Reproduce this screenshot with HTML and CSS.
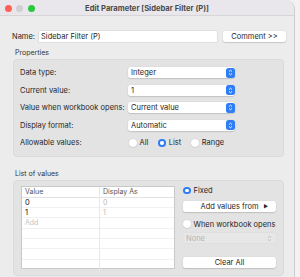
FILE: index.html
```html
<!DOCTYPE html>
<html lang="en">
<head>
    <meta charset="UTF-8">
    <meta name="viewport" content="width=device-width, initial-scale=1.0">
    <title>Edit Parameter</title>
    <link rel="stylesheet" href="styles.css">
</head>
<body>
    <div class="window">
        <div class="titlebar">
            <div class="lights">
                <span class="light red"></span>
                <span class="light gray"></span>
                <span class="light green"></span>
            </div>
            <div class="title">Edit Parameter [Sidebar Filter (P)]</div>
            <div></div>
        </div>

        <div class="name-row">
            <label class="name-label">Name:</label>
            <div class="name-input">Sidebar Filter (P)</div>
            <button class="btn comment-btn">Comment &gt;&gt;</button>
        </div>

        <div class="section-label">Properties</div>
        <div class="group props">
            <div class="prop-row">
                <span class="prop-label">Data type:</span>
                <div class="select"><span>Integer</span><span class="stepper"><svg width="5" height="7" viewBox="0 0 5 7"><path d="M1 2.6 2.5 1.2 4 2.6M1 4.4 2.5 5.8 4 4.4" fill="none" stroke="#fff" stroke-width="0.9"/></svg></span></div>
            </div>
            <div class="prop-row">
                <span class="prop-label">Current value:</span>
                <div class="select"><span>1</span><span class="stepper"><svg width="5" height="7" viewBox="0 0 5 7"><path d="M1 2.6 2.5 1.2 4 2.6M1 4.4 2.5 5.8 4 4.4" fill="none" stroke="#fff" stroke-width="0.9"/></svg></span></div>
            </div>
            <div class="prop-row">
                <span class="prop-label">Value when workbook opens:</span>
                <div class="select"><span>Current value</span><span class="stepper"><svg width="5" height="7" viewBox="0 0 5 7"><path d="M1 2.6 2.5 1.2 4 2.6M1 4.4 2.5 5.8 4 4.4" fill="none" stroke="#fff" stroke-width="0.9"/></svg></span></div>
            </div>
            <div class="prop-row">
                <span class="prop-label">Display format:</span>
                <div class="select"><span>Automatic</span><span class="stepper"><svg width="5" height="7" viewBox="0 0 5 7"><path d="M1 2.6 2.5 1.2 4 2.6M1 4.4 2.5 5.8 4 4.4" fill="none" stroke="#fff" stroke-width="0.9"/></svg></span></div>
            </div>
            <div class="prop-row">
                <span class="prop-label">Allowable values:</span>
                <div class="radios">
                    <span class="radio-item"><span class="radio"></span>All</span>
                    <span class="radio-item"><span class="radio on"></span>List</span>
                    <span class="radio-item"><span class="radio"></span>Range</span>
                </div>
            </div>
        </div>

        <div class="section-label list-label">List of values</div>
        <div class="group values">
            <div class="table">
                <div class="trow head"><span>Value</span><span>Display As</span></div>
                <div class="trow"><span class="val">0</span><span class="dim">0</span></div>
                <div class="trow"><span class="val">1</span><span class="dim">1</span></div>
                <div class="trow"><span class="add">Add</span><span></span></div>
                <div class="trow"><span></span><span></span></div>
                <div class="trow"><span></span><span></span></div>
                <div class="trow"><span></span><span></span></div>
                <div class="trow last"><span></span><span></span></div>
            </div>
            <div class="side">
                <span class="radio-item"><span class="radio on"></span>Fixed</span>
                <button class="btn add-btn">Add values from<span class="tri">&#9654;</span></button>
                <span class="radio-item"><span class="radio"></span>When workbook opens</span>
                <div class="select disabled"><span>None</span><svg width="5" height="7" viewBox="0 0 5 7"><path d="M1 2.6 2.5 1.2 4 2.6M1 4.4 2.5 5.8 4 4.4" fill="none" stroke="#b4b4b4" stroke-width="0.8"/></svg></div>
                <button class="btn clear-btn">Clear All</button>
            </div>
        </div>
    </div>
</body>
</html>
```

FILE: styles.css
```css
body {
    margin: 0;
    background: #f2f2f2;
    font-family: Inter, "Noto Sans", sans-serif;
    font-size: 7.5px;
    color: #262626;
}
.window {
    width: 295px;
    height: 277px;
    background: #ececec;
    border-right: 1px solid #cdcdcd;
    border-top-right-radius: 9px;
    box-sizing: border-box;
    overflow: hidden;
}
.titlebar {
    height: 16px;
    display: grid;
    grid-template-columns: 1fr auto 1fr;
    align-items: center;
    background: #e9e7eb;
    border-bottom: 1px solid #d6d6d6;
    box-sizing: border-box;
}
.lights {
    display: flex;
    gap: 4.5px;
    padding-left: 4.5px;
    padding-top: 1px;
}
.light {
    width: 7px;
    height: 7px;
    border-radius: 50%;
}
.red { background: #fe5f57; }
.gray { background: #d0cfd2; }
.green { background: #29c840; }
.title {
    font-weight: 700;
    color: #4a4a4a;
    font-size: 7.6px;
    padding-top: 1px;
}
.name-row {
    display: flex;
    align-items: center;
    padding: 15px 0 0 12px;
    height: 11px;
}
.name-label {
    width: 27px;
}
.name-input {
    width: 178px;
    height: 11px;
    background: #fff;
    box-sizing: border-box;
    padding-left: 2px;
    line-height: 11px;
    box-shadow: 0 0 0 0.5px #d0d0d0;
}
.btn {
    font-family: inherit;
    font-size: 7.5px;
    color: #262626;
    background: #fff;
    border: none;
    border-radius: 2.5px;
    box-shadow: 0 0.5px 1.2px rgba(0, 0, 0, 0.28);
    padding: 0;
    height: 11px;
    line-height: 11px;
}
.comment-btn {
    margin-left: 6px;
    width: 63px;
}
.section-label {
    padding: 6px 0 0 15px;
    height: 10px;
    line-height: 10px;
    font-size: 7px;
    color: #333;
}
.group {
    margin: 1px 10px 0 13px;
    background: #e3e3e3;
    border: 1px solid #dadada;
    border-radius: 4px;
}
.props {
    padding: 4px 0 4px 6px;
}
.prop-row {
    display: flex;
    align-items: center;
    height: 17.5px;
}
.prop-label {
    width: 108px;
}
.select {
    width: 107px;
    height: 11px;
    background: #fff;
    border-radius: 2.5px;
    box-shadow: 0 0.5px 1.2px rgba(0, 0, 0, 0.25);
    display: flex;
    align-items: center;
    justify-content: space-between;
    padding-left: 3px;
    box-sizing: border-box;
}
.stepper {
    width: 9px;
    height: 10px;
    background: #2f7ef6;
    border-radius: 2.5px;
    display: flex;
    align-items: center;
    justify-content: center;
    margin-right: 0.5px;
}
.radios {
    display: flex;
    gap: 10px;
    margin-left: 1px;
}
.radio-item {
    display: flex;
    align-items: center;
    gap: 3px;
}
.radio {
    width: 7.5px;
    height: 7.5px;
    border-radius: 50%;
    background: #fff;
    box-shadow: 0 0.3px 1px rgba(0, 0, 0, 0.3);
    box-sizing: border-box;
}
.radio.on {
    background: #fff;
    border: 2.3px solid #2f7ef6;
    box-shadow: none;
}
.list-label {
    padding-top: 12px;
}
.values {
    display: flex;
    padding: 5px 7px 6px 7px;
    height: 96px;
    box-sizing: border-box;
    gap: 8px;
}
.table {
    width: 156px;
    background: #fff;
    border: 1px solid #c9c9c9;
    box-sizing: border-box;
    font-size: 7px;
}
.trow {
    display: grid;
    grid-template-columns: 77px 1fr;
    height: 10.4px;
    line-height: 10.4px;
    border-bottom: 1px solid #f0f0f0;
    box-sizing: border-box;
}
.trow.last {
    border-bottom: none;
}
.trow span {
    padding-left: 3px;
}
.trow span + span {
    border-left: 1px solid #e8e8e8;
}
.trow.head {
    height: 11px;
    color: #555;
    border-bottom: 1px solid #e2e2e2;
}
.val {
    color: #111;
    font-size: 7.5px;
}
.dim {
    color: #b8b8b8;
}
.add {
    color: #c4c4c4;
}
.side {
    width: 93px;
    display: flex;
    flex-direction: column;
}
.side .radio-item {
    height: 10px;
    margin-top: 0;
}
.add-btn {
    margin-top: 6px;
    width: 93px;
    position: relative;
}
.tri {
    font-size: 5px;
    position: absolute;
    right: 8px;
    top: 0;
}
.side .radio-item + .select {
    margin-top: 4px;
}
.add-btn + .radio-item {
    margin-top: 7px;
}
.select.disabled {
    width: 93px;
    background: #e7e7e7;
    box-shadow: 0 0 0 0.5px #dcdcdc;
    color: #b5b5b5;
    padding-right: 4px;
}
.clear-btn {
    margin-top: 14px;
    width: 93px;
}
```
